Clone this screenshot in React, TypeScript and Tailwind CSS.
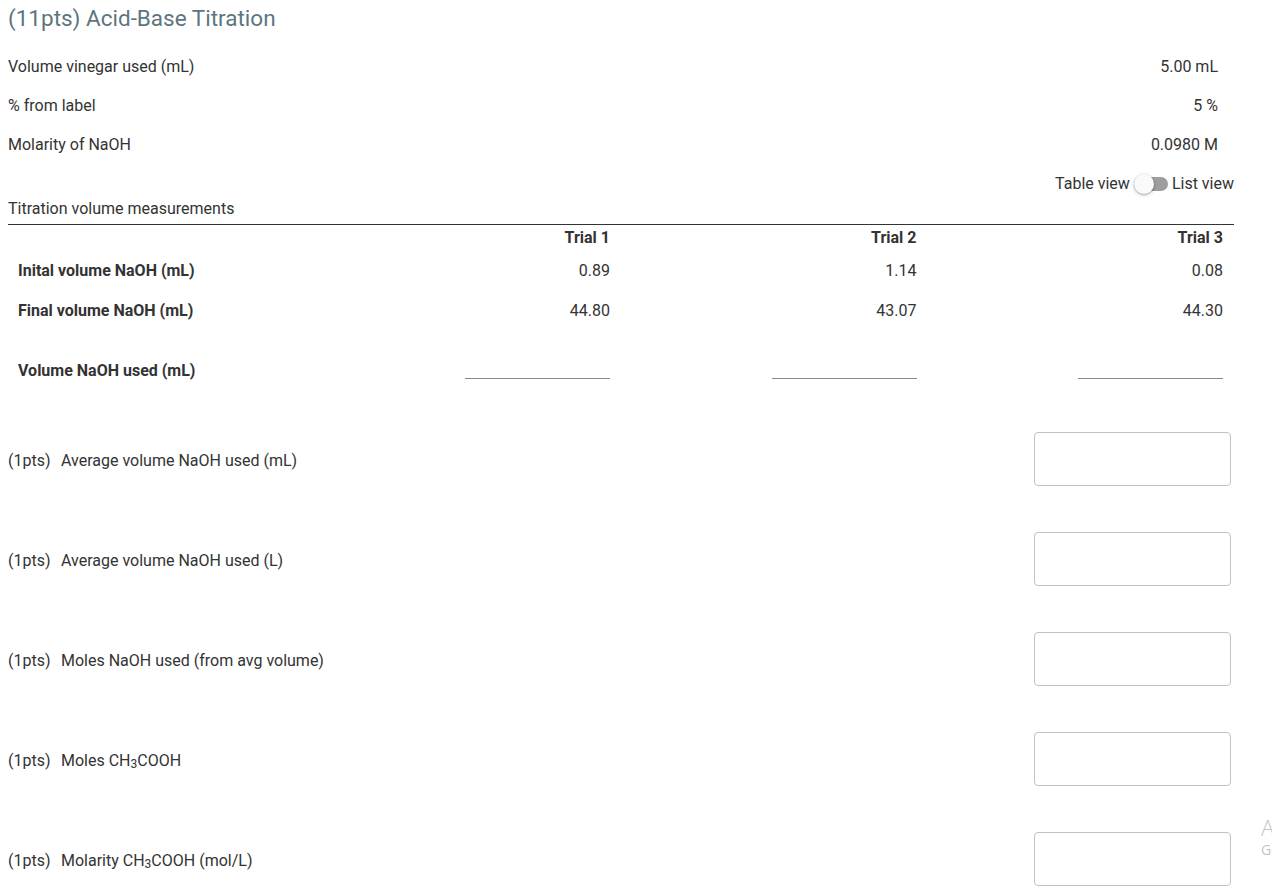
import { useState } from "react";

const trials = [
  { name: "Trial 1", initial: "0.89", final: "44.80" },
  { name: "Trial 2", initial: "1.14", final: "43.07" },
  { name: "Trial 3", initial: "0.08", final: "44.30" },
];

function Sub3({ before, after }: { before: string; after: string }) {
  return (
    <>
      {before}CH<sub className="relative top-[2px] text-[12px]">3</sub>COOH{after}
    </>
  );
}

function App() {
  const [listView, setListView] = useState(false);

  const questions = [
    <>Average volume NaOH used (mL)</>,
    <>Average volume NaOH used (L)</>,
    <>Moles NaOH used (from avg volume)</>,
    <Sub3 before="Moles " after="" />,
    <Sub3 before="Molarity " after=" (mol/L)" />,
  ];

  return (
    <div
      className="relative h-[894px] w-full overflow-hidden bg-white text-[16px] text-[#333333]"
      style={{ fontFamily: "Roboto, 'Liberation Sans', sans-serif" }}
    >
      <div className="w-[1234px] pl-[8px]">
        {/* Title */}
        <h1 className="h-[36px] text-[22.5px] leading-[36px] text-[#5d7580]">
          (11pts) Acid-Base Titration
        </h1>

        {/* Given values */}
        <div className="mt-[11px]">
          {[
            ["Volume vinegar used (mL)", "5.00 mL"],
            ["% from label", "5 %"],
            ["Molarity of NaOH", "0.0980 M"],
          ].map(([label, value]) => (
            <div key={label} className="flex h-[39px] items-center justify-between pr-[16px]">
              <span>{label}</span>
              <span>{value}</span>
            </div>
          ))}
        </div>

        {/* View toggle */}
        <div className="flex h-[38px] items-center justify-end pt-[1px]">
          <span>Table view</span>
          <button
            onClick={() => setListView(!listView)}
            className="relative mx-[4px] h-[14px] w-[34px] rounded-full bg-[#9e9e9e]"
          >
            <span
              className={`absolute top-[-3px] h-[20px] w-[20px] rounded-full bg-[#fafafa] shadow-[0_1px_3px_rgba(0,0,0,0.4)] ${
                listView ? "left-[14px]" : "left-0"
              }`}
            />
          </button>
          <span>List view</span>
        </div>

        {/* Titration table */}
        <div className="flex h-[14px] items-center">Titration volume measurements</div>
        <div className="mt-[8px] border-t-[1.5px] border-[#333333]">
          <div className="grid h-[26px] grid-cols-4 items-center font-bold">
            <div />
            {trials.map((t) => (
              <div key={t.name} className="pr-[11px] text-right">
                {t.name}
              </div>
            ))}
          </div>
          <div className="grid h-[40px] grid-cols-4 items-center">
            <div className="pl-[10px] font-bold">Inital volume NaOH (mL)</div>
            {trials.map((t) => (
              <div key={t.name} className="pr-[11px] text-right">
                {t.initial}
              </div>
            ))}
          </div>
          <div className="grid h-[40px] grid-cols-4 items-center">
            <div className="pl-[10px] font-bold">Final volume NaOH (mL)</div>
            {trials.map((t) => (
              <div key={t.name} className="pr-[11px] text-right">
                {t.final}
              </div>
            ))}
          </div>
          <div className="mt-[20px] grid h-[40px] grid-cols-4 items-center">
            <div className="pl-[10px] font-bold">Volume NaOH used (mL)</div>
            {trials.map((t) => (
              <div key={t.name} className="flex justify-end pr-[11px]">
                <div className="h-[16px] w-[145px] border-b border-[#8a8a8a]" />
              </div>
            ))}
          </div>
        </div>

        {/* Questions */}
        <div className="mt-[41px] flex flex-col gap-[46px]">
          {questions.map((q, i) => (
            <div key={i} className="flex h-[54px] items-center justify-between">
              <div className="flex items-center pt-[4px]">
                <span className="w-[53px]">(1pts)</span>
                <span>{q}</span>
              </div>
              <input
                className="mr-[3px] h-[54px] w-[197px] rounded-[4px] border border-[#c2c2c2] bg-white outline-none"
                type="text"
              />
            </div>
          ))}
        </div>
      </div>

      {/* Activation watermark, cut off at the edge as in the screenshot */}
      <div
        className="absolute left-[1261px] top-[813px] whitespace-nowrap text-[#c4c4c4]"
        style={{ fontFamily: "'Open Sans', 'Liberation Sans', sans-serif" }}
      >
        <div className="text-[22px] font-light leading-[28px]">Activate Windows</div>
        <div className="text-[14px] leading-[18px]">Go to Settings to activate Windows.</div>
      </div>
    </div>
  );
}

export default App;
